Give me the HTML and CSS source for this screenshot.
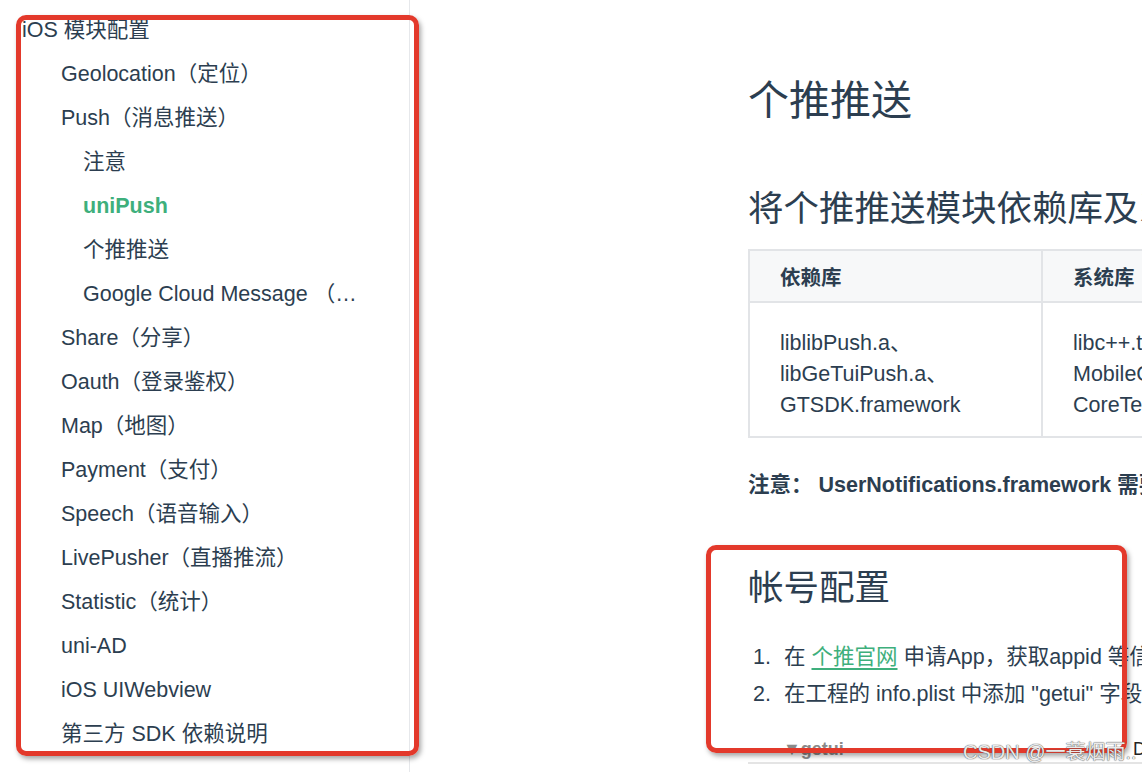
FILE: index.html
```html
<!DOCTYPE html>
<html lang="zh-CN">
<head>
    <meta charset="UTF-8">
    <meta name="viewport" content="width=device-width, initial-scale=1.0">
    <title>iOS 模块配置 - 个推推送</title>
    <link rel="stylesheet" href="styles.css">
</head>
<body>
    <div class="page">
        <!-- Sidebar table of contents -->
        <aside class="sidebar">
            <ul class="toc">
                <li class="toc-item lvl-1">iOS 模块配置</li>
                <li class="toc-item lvl-2">Geolocation（定位）</li>
                <li class="toc-item lvl-2">Push（消息推送）</li>
                <li class="toc-item lvl-3">注意</li>
                <li class="toc-item lvl-3 active">uniPush</li>
                <li class="toc-item lvl-3">个推推送</li>
                <li class="toc-item lvl-3">Google Cloud Message （GCM）</li>
                <li class="toc-item lvl-2">Share（分享）</li>
                <li class="toc-item lvl-2">Oauth（登录鉴权）</li>
                <li class="toc-item lvl-2">Map（地图）</li>
                <li class="toc-item lvl-2">Payment（支付）</li>
                <li class="toc-item lvl-2">Speech（语音输入）</li>
                <li class="toc-item lvl-2">LivePusher（直播推流）</li>
                <li class="toc-item lvl-2">Statistic（统计）</li>
                <li class="toc-item lvl-2">uni-AD</li>
                <li class="toc-item lvl-2">iOS UIWebview</li>
                <li class="toc-item lvl-2">第三方 SDK 依赖说明</li>
            </ul>
        </aside>

        <!-- Document content -->
        <main class="content">
            <h2 class="title">个推推送</h2>
            <h3 class="subtitle first">将个推推送模块依赖库及系统库添加到工程</h3>

            <table class="deps">
                <thead>
                    <tr>
                        <th class="col-lib">依赖库</th>
                        <th class="col-sys">系统库</th>
                    </tr>
                </thead>
                <tbody>
                    <tr>
                        <td>liblibPush.a、<br>libGeTuiPush.a、<br>GTSDK.framework</td>
                        <td>libc++.tbd、<br>MobileCoreServices.framework、<br>CoreTelephony.framework</td>
                    </tr>
                </tbody>
            </table>

            <p class="note"><strong>注意：</strong> <strong>UserNotifications.framework 需要在 iOS 10 以上添加</strong></p>

            <h3 class="subtitle">帐号配置</h3>
            <ol class="steps">
                <li class="step"><span class="step-num">1.</span><span>在 <a class="link" href="#">个推官网</a> 申请App，获取appid 等信息</span></li>
                <li class="step"><span class="step-num">2.</span><span>在工程的 info.plist 中添加 "getui" 字段</span></li>
            </ol>

            <div class="plist-row">
                <span class="plist-key">▼getui</span>
                <span class="plist-type">Dictionary</span>
            </div>
        </main>

        <!-- Annotation marks drawn over the screenshot -->
        <div class="mark mark-sidebar"></div>
        <div class="mark mark-account"></div>
        <div class="watermark">CSDN @一蓑烟雨..</div>
    </div>
</body>
</html>
```

FILE: styles.css
```css
* {
    margin: 0;
    padding: 0;
    box-sizing: border-box;
}

body {
    font-family: 'Liberation Sans', 'Noto Sans CJK SC', sans-serif;
    font-size: 21.5px;
    color: #2c3e50;
    background: #fff;
    width: 1142px;
    height: 772px;
    overflow: hidden;
}

.page {
    position: relative;
    display: flex;
    height: 772px;
}

/* Sidebar */
.sidebar {
    width: 410px;
    flex-shrink: 0;
    border-right: 1px solid #e6e8eb;
    padding-top: 8px;
}

.toc {
    list-style: none;
}

.toc-item {
    height: 44px;
    line-height: 44px;
    white-space: nowrap;
    overflow: hidden;
    text-overflow: ellipsis;
    padding-right: 38px;
    color: #2c3e50;
}

.lvl-1 {
    padding-left: 22px;
}

.lvl-2 {
    padding-left: 61px;
}

.lvl-3 {
    padding-left: 83px;
}

.toc-item.active {
    color: #3eaf7c;
    font-weight: bold;
}

/* Content */
.content {
    flex: 1;
    overflow: hidden;
    padding-left: 338px;
    white-space: nowrap;
}

.title {
    font-family: 'Noto Sans CJK SC', sans-serif;
    font-size: 41px;
    font-weight: 400;
    line-height: 50px;
    margin-top: 72px;
}

.subtitle {
    font-family: 'Noto Sans CJK SC', sans-serif;
    font-size: 35.5px;
    font-weight: 400;
    line-height: 44px;
    margin-top: 62px;
}

.subtitle.first {
    margin-top: 62px;
}

.deps {
    margin-top: 21px;
    border-collapse: collapse;
    table-layout: fixed;
    width: 700px;
}

.deps th,
.deps td {
    border: 2px solid #e2e4e7;
    text-align: left;
    padding-left: 30px;
    vertical-align: middle;
}

.deps th {
    background: #f7f8f9;
    height: 52px;
    font-weight: bold;
    font-size: 20.5px;
}

.deps td {
    height: 135px;
    line-height: 31px;
    padding-top: 9px;
}

.col-lib {
    width: 293px;
}

.note {
    margin-top: 31px;
    line-height: 32px;
}

.steps {
    list-style: none;
    margin-top: 32px;
}

.step {
    display: flex;
    line-height: 37px;
}

.step-num {
    width: 36px;
    padding-left: 5px;
    flex-shrink: 0;
}

.link {
    color: #3eaf7c;
    text-decoration: underline;
    text-underline-offset: 4px;
}

.plist-row {
    display: flex;
    margin-top: 21px;
    height: 30px;
    line-height: 30px;
    border-bottom: 2px solid #e4e4e4;
    font-size: 18px;
}

.plist-key {
    width: 385px;
    flex-shrink: 0;
    padding-left: 35px;
    color: #8a8a8a;
    font-weight: bold;
}

.plist-type {
    flex-shrink: 0;
    color: #222;
}

/* Red annotation boxes */
.mark {
    position: absolute;
    border: 5px solid #e3392b;
    border-radius: 10px;
    box-shadow: 2px 3px 5px rgba(0, 0, 0, 0.35);
}

.mark-sidebar {
    left: 16px;
    top: 15px;
    width: 403px;
    height: 741px;
}

.mark-account {
    left: 706px;
    top: 545px;
    width: 421px;
    height: 208px;
}

.watermark {
    position: absolute;
    left: 963px;
    top: 738px;
    font-size: 20px;
    line-height: 28px;
    color: rgba(255, 255, 255, 0.9);
    text-shadow: 0 0 1px #555, 0 0 1px #555;
}
```
